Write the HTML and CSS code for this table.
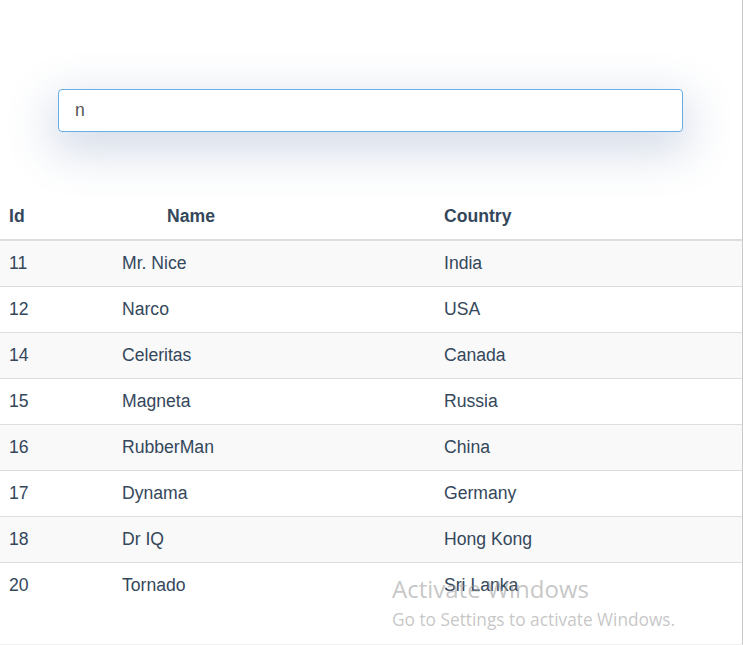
FILE: index.html
```html
<!DOCTYPE html>
<html>
<head>
<meta charset="utf-8">
<link rel="stylesheet" href="styles.css">
</head>
<body>
<div class="page">
  <div class="search">
    <input class="search-input" type="text" value="n">
  </div>
  <table class="heroes">
    <thead>
      <tr><th class="c-id">Id</th><th class="c-name">Name</th><th class="c-country">Country</th></tr>
    </thead>
    <tbody>
      <tr><td>11</td><td>Mr. Nice</td><td>India</td></tr>
      <tr><td>12</td><td>Narco</td><td>USA</td></tr>
      <tr><td>14</td><td>Celeritas</td><td>Canada</td></tr>
      <tr><td>15</td><td>Magneta</td><td>Russia</td></tr>
      <tr><td>16</td><td>RubberMan</td><td>China</td></tr>
      <tr><td>17</td><td>Dynama</td><td>Germany</td></tr>
      <tr><td>18</td><td>Dr IQ</td><td>Hong Kong</td></tr>
      <tr><td>20</td><td>Tornado</td><td>Sri Lanka</td></tr>
    </tbody>
  </table>
  <div class="watermark">
    <div class="wm-title">Activate Windows</div>
    <div class="wm-sub">Go to Settings to activate Windows.</div>
  </div>
</div>
</body>
</html>
```
FILE: styles.css
```css
html, body {
  margin: 0;
  padding: 0;
  background: #fff;
}
.page {
  position: relative;
  width: 742px;
  height: 644px;
  border-right: 1px solid #c8c8c8;
  border-bottom: 1px solid #f0f0f0;
  font-family: "Liberation Sans", Arial, sans-serif;
  font-size: 17.6px;
  color: #34475b;
  overflow: hidden;
}
.search {
  padding: 89px 0 61px 58px;
}
.search-input {
  display: block;
  box-sizing: border-box;
  width: 625px;
  height: 43px;
  margin: 0;
  padding: 0 16px;
  border: 1px solid #66afe9;
  border-radius: 4px;
  font-family: "Liberation Sans", Arial, sans-serif;
  font-size: 17.6px;
  color: #555;
  background: #fff;
  outline: none;
  box-shadow: 0 14px 45px 6px rgba(60, 90, 150, 0.22);
}
.heroes {
  width: 742px;
  border-collapse: collapse;
  border-spacing: 0;
}
.heroes th {
  text-align: left;
  font-weight: bold;
  height: 47px;
  padding: 0 8px 0 9px;
  line-height: 22px;
  border-bottom: 2px solid #ddd;
  box-sizing: border-box;
  vertical-align: middle;
}
.heroes td {
  padding: 0 8px 0 9px;
  height: 46px;
  line-height: 22px;
  border-top: 1px solid #ddd;
  box-sizing: border-box;
  vertical-align: middle;
}
.heroes tbody tr:first-child td { border-top: none; }
.heroes tbody tr:nth-child(odd) { background: #f9f9f9; }
.c-id { width: 114px; }
.heroes .c-name { width: 322px; padding-left: 53px; }
.heroes td:nth-child(2), .heroes td:nth-child(3), .heroes .c-country { padding-left: 8px; }
.watermark {
  position: absolute;
  left: 392px;
  top: 573px;
  font-family: "Open Sans", "Noto Sans", sans-serif;
  color: rgba(150, 150, 150, 0.55);
  pointer-events: none;
}
.wm-title {
  font-size: 24px;
  line-height: 31px;
}
.wm-sub {
  font-size: 17.3px;
  line-height: 24px;
  margin-top: 4px;
}
```
